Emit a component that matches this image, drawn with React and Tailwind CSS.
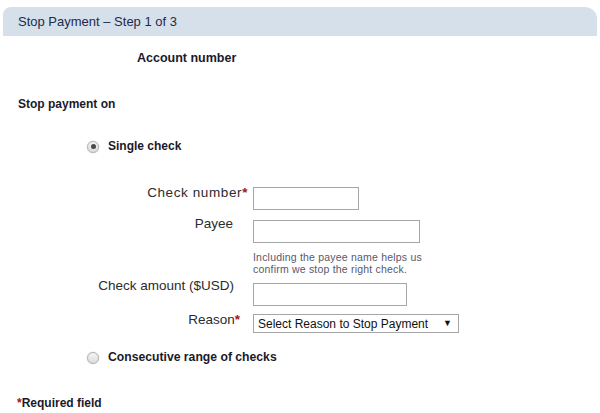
const Radio = ({ checked }) => (
  <span className="flex h-[12px] w-[12px] items-center justify-center rounded-full border border-[#b4b4b4] bg-gradient-to-b from-[#f4f4f4] to-[#dcdcdc] shadow-[0_0_1px_#999]">
    {checked && <span className="h-[5px] w-[5px] rounded-full bg-[#4a4a4a]" />}
  </span>
);

const Req = () => <span className="font-bold text-[#a3121e]">*</span>;

const FormRow = ({ label, pr, children, className = '' }) => (
  <div className={`flex items-start ${className}`}>
    <div className={`w-[253px] shrink-0 text-right text-[13.5px] leading-[15px] text-[#2b2b2b] ${pr}`}>{label}</div>
    <div>{children}</div>
  </div>
);

export default function App() {
  return (
    <div className="h-[413px] w-[600px] overflow-hidden bg-white font-['Liberation_Sans',Arial,sans-serif] text-[#1f2a44]">
      <div className="mx-[3px] mt-[7px] flex h-[29px] items-center rounded-tl-[8px] rounded-tr-[12px] bg-[#d6e0eb] pl-[15px] text-[13px] text-[#1c2b4a]">
        Stop Payment – Step 1 of 3
      </div>

      <div className="mt-[15px] pl-[137px] text-[12.5px] font-bold leading-[15px] text-[#1a1a2a]">Account number</div>

      <div className="mt-[31px] pl-[18px] text-[12px] font-bold leading-[15px] text-[#1a1a2a]">Stop payment on</div>

      <div className="mt-[27px] flex items-center pl-[87px] text-[12px] font-bold leading-[15px] text-[#1a1a2a]">
        <Radio checked />
        <span className="ml-[9px]">Single check</span>
      </div>

      <FormRow className="mt-[32px]" pr="pr-[5px] -mt-[1px] tracking-[0.6px]" label={<>Check number<Req /></>}>
        <input className="h-[23px] w-[106px] border border-[#a6a6a6] bg-white outline-none" />
      </FormRow>

      <FormRow className="mt-[9px]" pr="pr-[20px] -mt-[3px]" label="Payee">
        <input className="h-[23px] w-[167px] border border-[#a6a6a6] bg-white outline-none" />
        <p className="mt-[8px] w-[190px] text-[10.5px] leading-[12px] tracking-[0.2px] text-[#58586e]">
          Including the payee name helps us confirm we stop the right check.
        </p>
      </FormRow>

      <FormRow className="mt-[7px]" pr="pr-[19px] -mt-[4px]" label="Check amount ($USD)">
        <input className="h-[23px] w-[154px] border border-[#a6a6a6] bg-white outline-none" />
      </FormRow>

      <FormRow className="mt-[8px]" pr="pr-[13px] -mt-[2px]" label={<>Reason<Req /></>}>
        <div className="flex h-[19px] w-[206px] items-center justify-between border border-[#a6a6a6] bg-white pl-[4px] pr-[6px] text-[12px] text-[#111]">
          <span>Select Reason to Stop Payment</span>
          <span className="text-[9px]">▼</span>
        </div>
      </FormRow>

      <div className="mt-[17px] flex items-center pl-[87px] text-[12.2px] font-bold leading-[15px] text-[#1a1a2a]">
        <Radio />
        <span className="ml-[9px]">Consecutive range of checks</span>
      </div>

      <div className="mt-[31px] pl-[17px] text-[12px] font-bold leading-[15px] text-[#1a1a2a]">
        <Req />Required field
      </div>
    </div>
  );
}
